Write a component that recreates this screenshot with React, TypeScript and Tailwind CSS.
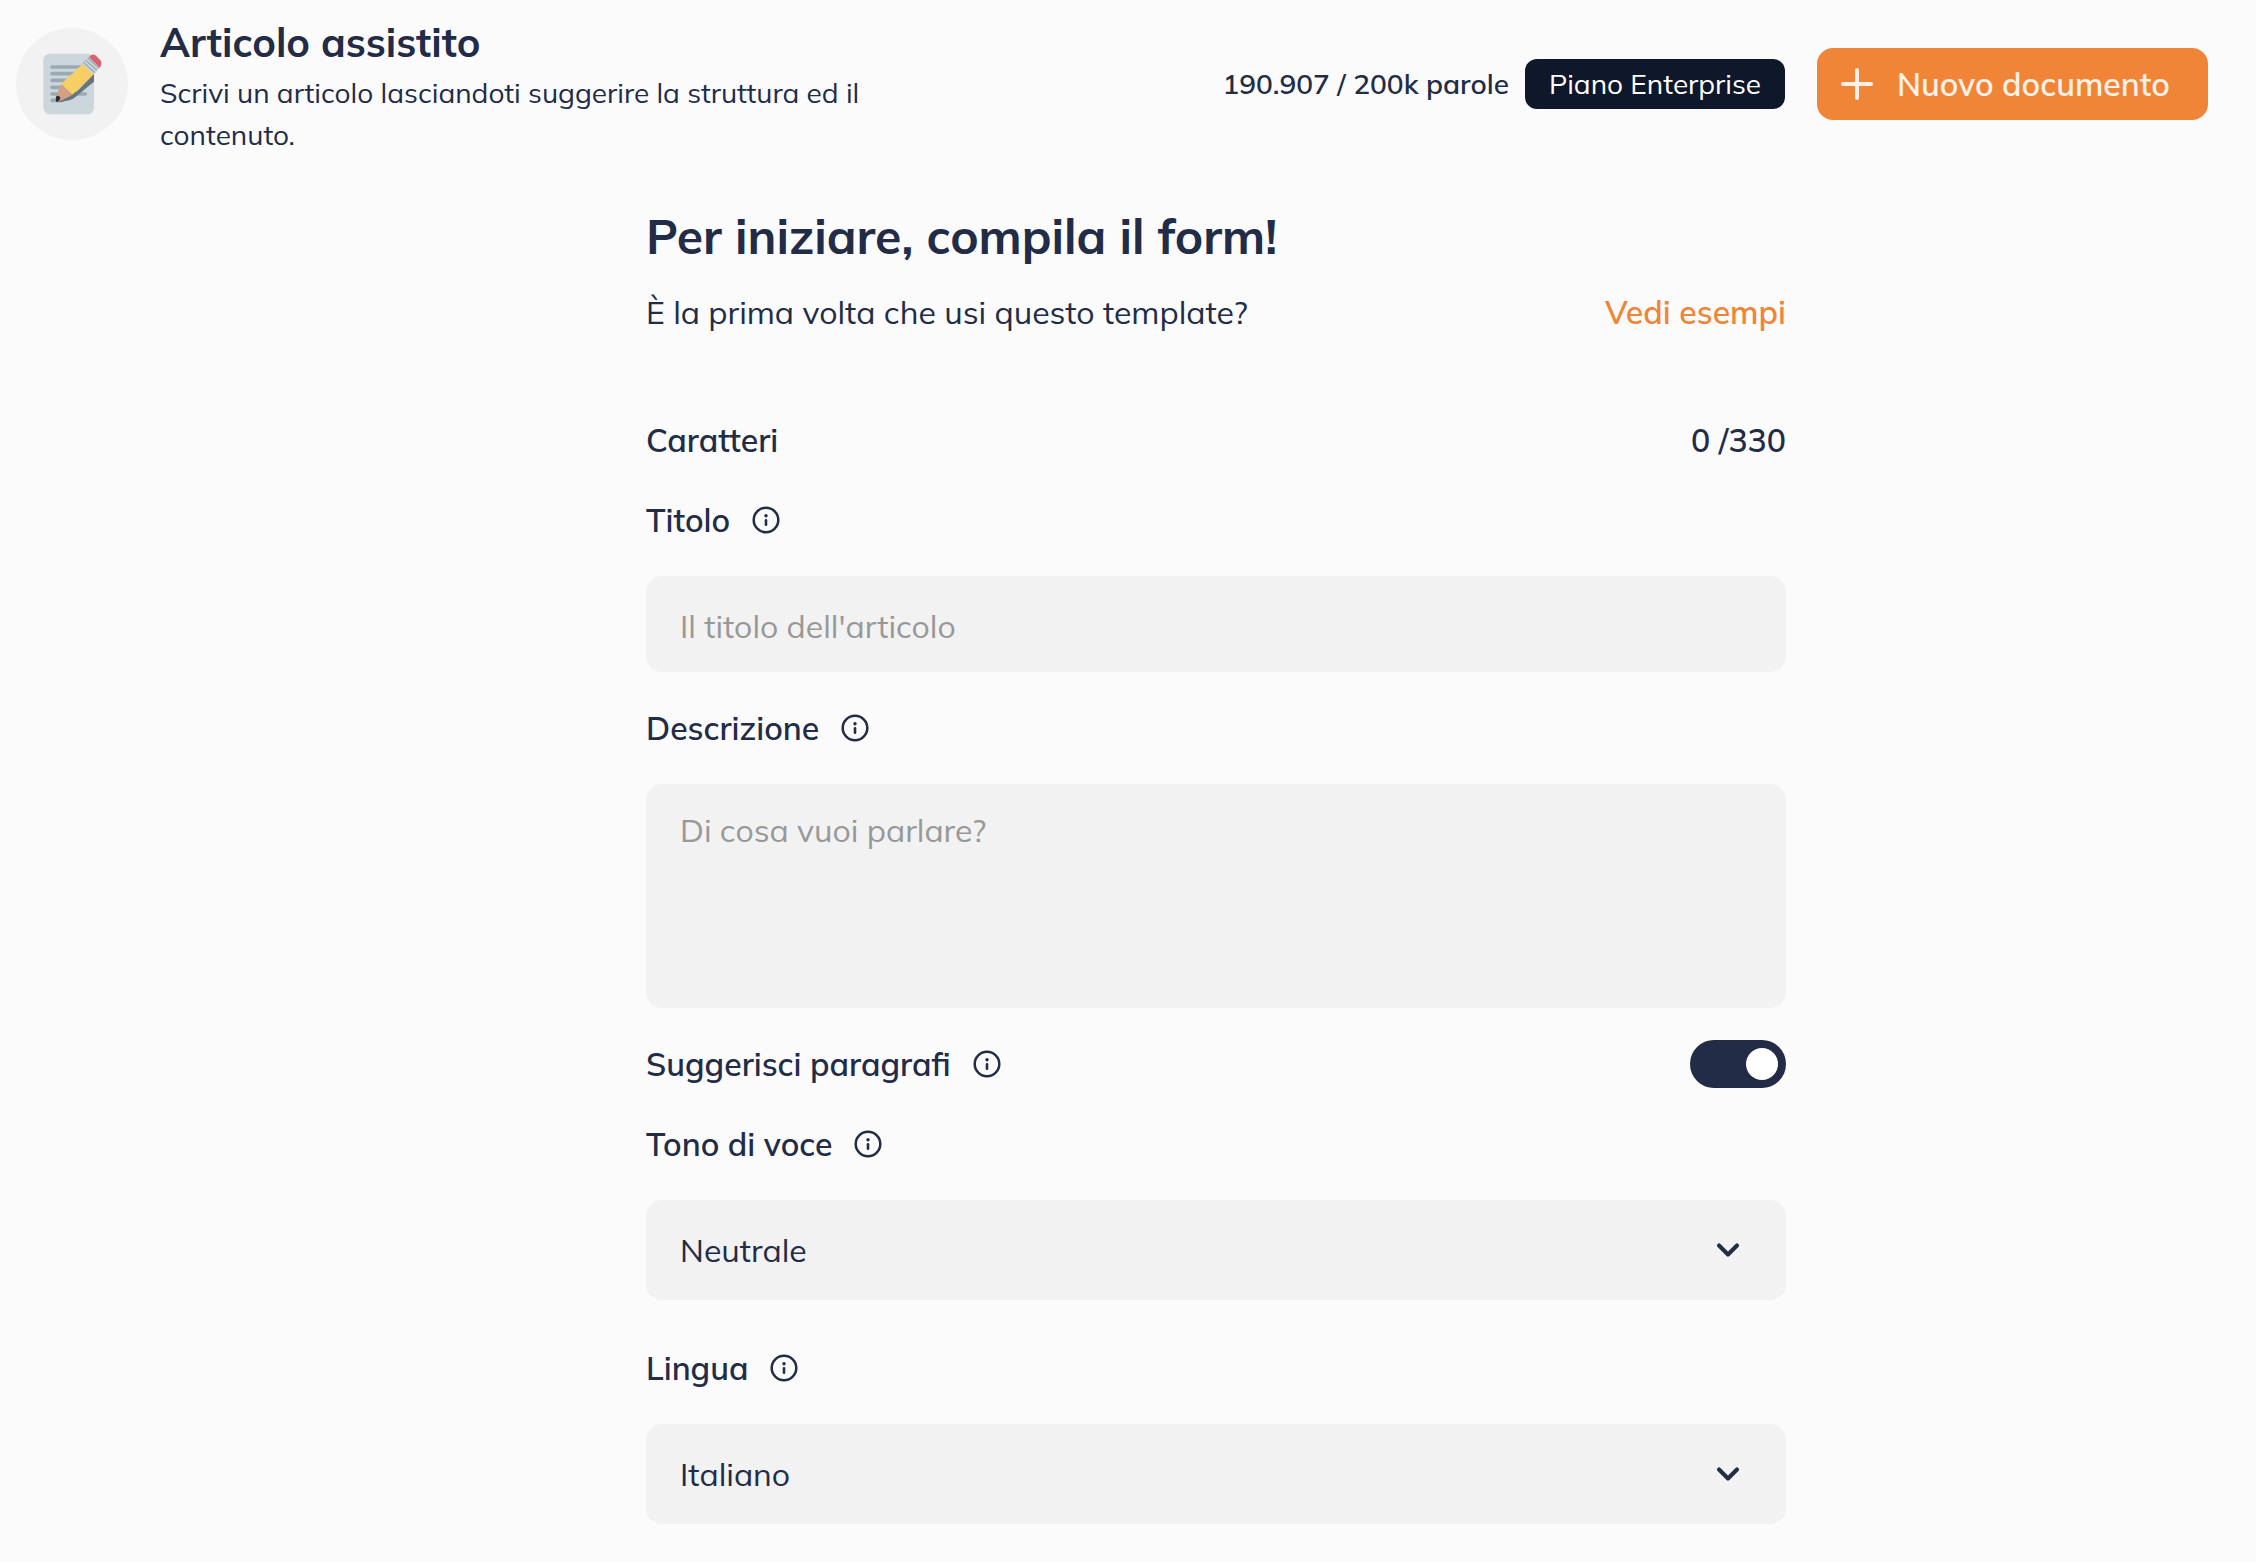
import { useState } from "react";
import type { ReactNode } from "react";
import { ChevronDown, Plus } from "lucide-react";

function InfoIcon() {
  return (
    <svg className="size-8 shrink-0" viewBox="0 0 32 32" fill="none" aria-hidden="true">
      <circle cx="16" cy="16" r="12.3" stroke="currentColor" strokeWidth="2.5" />
      <circle cx="16" cy="11.7" r="1.7" fill="currentColor" />
      <path d="M16 16.4v4.4" stroke="currentColor" strokeWidth="2.6" strokeLinecap="round" />
    </svg>
  );
}

function MemoIcon() {
  return (
    <svg className="h-[62px] w-[60px]" viewBox="0 0 180 186" fill="none" aria-hidden="true">
      <rect x="4" y="2" width="152" height="182" rx="20" fill="#CCD6DD" />
      <path
        d="M30 42h90M30 62h80M30 82h60M30 103h50M30 123h100M30 142h30"
        stroke="#99AAB5"
        strokeWidth="11"
        strokeLinecap="round"
      />
      <path d="M156 62v24l-46 38c-10 9-16 15-28 18-12 2-24 5-34 6l8-10 50-24z" fill="#66757F" />
      <path d="M121 33l34 31-64 61-34-32z" fill="#F7CE63" />
      <path d="M57 93l34 32c-10 8-24 12-40 20-6-3-9-8-7-16 4-13 7-25 13-36z" fill="#D2A085" />
      <path d="M43 130c4-4 12 0 12 6-1 5-6 8-10 12-4-2-5-12-2-18z" fill="#292F33" />
      <path d="M139 14l34 32-18 18-34-31z" fill="#CCD6DD" />
      <path d="M124 28l34 31M130 21l34 31M137 14l34 31" stroke="#99AAB5" strokeWidth="4" />
      <path d="M141 12c6-9 14-10 21-4l12 12c6 6 6 14-1 24z" fill="#DD606E" />
    </svg>
  );
}

function FieldLabel({ htmlFor, children }: { htmlFor: string; children: ReactNode }) {
  return (
    <div className="flex h-12 items-center gap-5">
      <label htmlFor={htmlFor} className="font-semibold">
        {children}
      </label>
      <InfoIcon />
    </div>
  );
}

function SelectField({ id, options }: { id: string; options: string[] }) {
  return (
    <div className="grid items-center">
      <select
        id={id}
        className="col-start-1 row-start-1 h-[100px] w-full appearance-none rounded-2xl bg-[#f2f2f2] px-[34px]"
      >
        {options.map((option) => (
          <option key={option}>{option}</option>
        ))}
      </select>
      <ChevronDown
        className="pointer-events-none col-start-1 row-start-1 mr-10 size-9 justify-self-end"
        strokeWidth={2.7}
      />
    </div>
  );
}

export default function App() {
  const [title, setTitle] = useState("");
  const [description, setDescription] = useState("");
  const [suggest, setSuggest] = useState(true);

  return (
    <div className="min-h-screen bg-[#fbfbfb] font-['Mulish','Open_Sans',sans-serif] text-[32px] leading-[48px] text-[#222c46]">
      <header className="flex items-center justify-between py-3 pr-12 pl-4">
        <div className="flex w-2/5 items-center gap-8">
          <div className="flex size-28 shrink-0 items-center justify-center rounded-full bg-[#f2f2f2]">
            <MemoIcon />
          </div>
          <div>
            <h1 className="text-[40px] leading-[60px] font-bold">Articolo assistito</h1>
            <p className="text-[28px] leading-[42px]">
              Scrivi un articolo lasciandoti suggerire la struttura ed il contenuto.
            </p>
          </div>
        </div>

        <div className="flex items-center gap-8">
          <div className="flex items-center gap-4 text-[28px] whitespace-nowrap">
            <span className="font-semibold">190.907 / 200k parole</span>
            <span className="min-w-[260px] rounded-xl bg-[#0f172a] px-4 text-center leading-[50px] text-white">
              Piano Enterprise
            </span>
          </div>
          <button
            type="button"
            className="flex h-[72px] min-w-[391px] items-center gap-4 rounded-2xl bg-[#f08538] pr-8 pl-4 font-semibold whitespace-nowrap text-[#fff1e8]"
          >
            <Plus className="size-12" strokeWidth={2} />
            Nuovo documento
          </button>
        </div>
      </header>

      <main className="pt-10 pb-9 pl-44">
        <div className="mx-auto max-w-[1140px]">
          <h2 className="text-5xl leading-[56px] font-bold">Per iniziare, compila il form!</h2>
          <div className="mt-6 flex items-center justify-between">
            <p>È la prima volta che usi questo template?</p>
            <a href="#esempi" className="font-semibold text-[#f08538]">
              Vedi esempi
            </a>
          </div>

          <form className="mt-20 flex flex-col gap-8">
            <div className="flex items-center justify-between font-semibold">
              <span>Caratteri</span>
              <span>{title.length + description.length} /330</span>
            </div>

            <FieldLabel htmlFor="titolo">Titolo</FieldLabel>
            <input
              id="titolo"
              type="text"
              value={title}
              onChange={(e) => setTitle(e.target.value)}
              placeholder="Il titolo dell'articolo"
              className="h-24 rounded-2xl bg-[#f2f2f2] px-[34px] pt-1 placeholder:text-[#989898]"
            />

            <FieldLabel htmlFor="descrizione">Descrizione</FieldLabel>
            <textarea
              id="descrizione"
              value={description}
              onChange={(e) => setDescription(e.target.value)}
              placeholder="Di cosa vuoi parlare?"
              className="h-56 resize-none rounded-2xl bg-[#f2f2f2] px-[34px] py-[22px] placeholder:text-[#989898]"
            />

            <div className="flex items-center justify-between">
              <FieldLabel htmlFor="paragrafi">Suggerisci paragrafi</FieldLabel>
              <input
                id="paragrafi"
                type="checkbox"
                role="switch"
                checked={suggest}
                onChange={(e) => setSuggest(e.target.checked)}
                className="flex h-12 w-24 appearance-none items-center rounded-full bg-gray-400 px-2 before:size-8 before:rounded-full before:bg-white checked:justify-end checked:bg-[#222c46]"
              />
            </div>

            <FieldLabel htmlFor="tono">Tono di voce</FieldLabel>
            <SelectField id="tono" options={["Neutrale", "Formale", "Amichevole"]} />

            <div className="mt-3 flex flex-col gap-8">
              <FieldLabel htmlFor="lingua">Lingua</FieldLabel>
              <SelectField id="lingua" options={["Italiano", "Inglese", "Spagnolo"]} />
            </div>
          </form>
        </div>
      </main>
    </div>
  );
}
